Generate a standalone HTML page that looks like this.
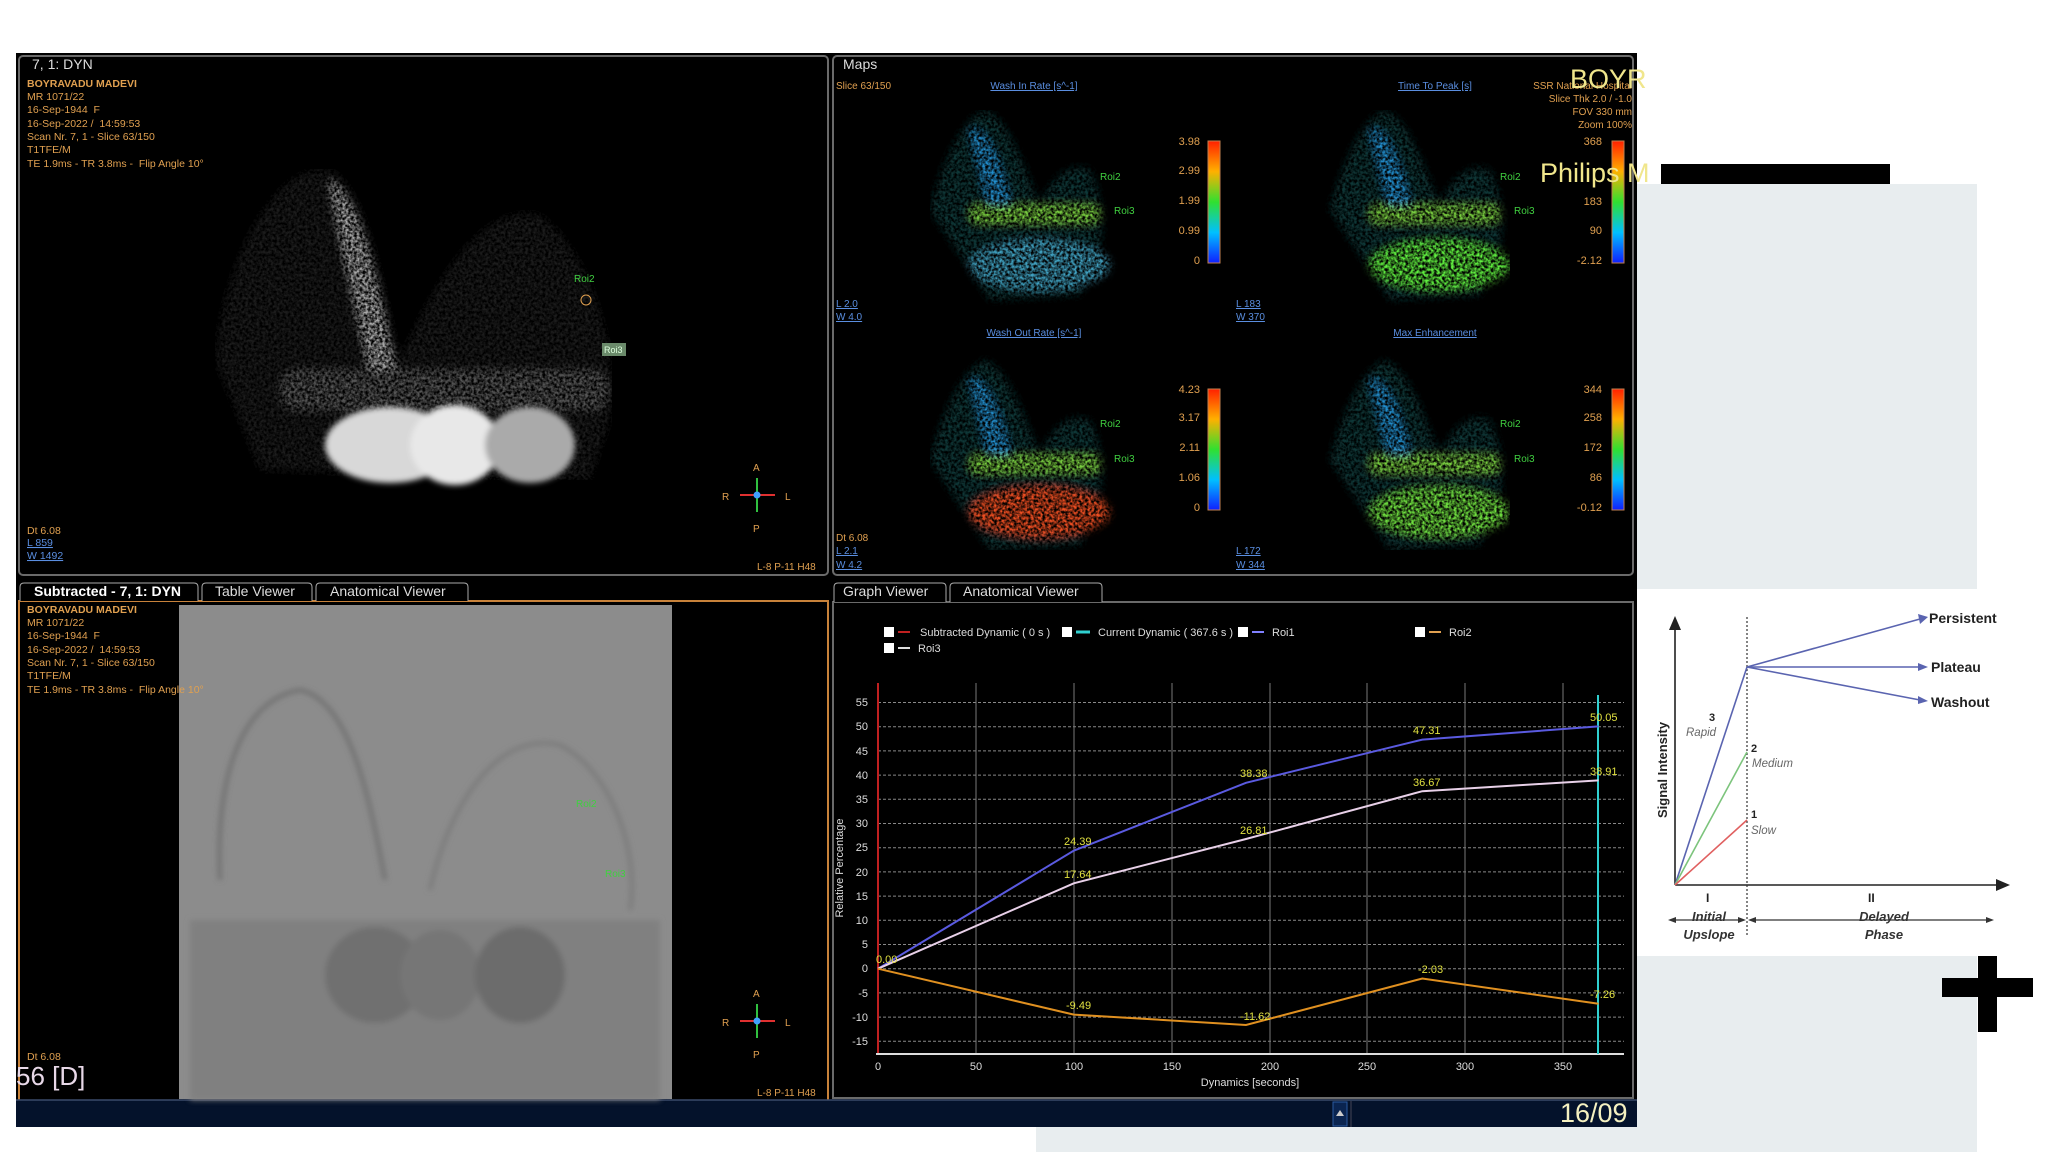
<!DOCTYPE html>
<html><head><meta charset="utf-8"><style>
html,body{margin:0;padding:0;background:#fff;}
body{width:2048px;height:1152px;overflow:hidden;position:relative;font-family:"Liberation Sans",sans-serif;}
svg{position:absolute;left:0;top:0;}
</style></head><body>
<svg width="2048" height="1152" viewBox="0 0 2048 1152" xmlns="http://www.w3.org/2000/svg" font-family="Liberation Sans Narrow, Liberation Sans, sans-serif">
<defs>
<filter id="b3"><feGaussianBlur stdDeviation="3"/></filter>
<filter id="speck" x="0" y="0" width="100%" height="100%">
<feGaussianBlur in="SourceGraphic" stdDeviation="4" result="bl"/>
<feTurbulence type="fractalNoise" baseFrequency="0.35" numOctaves="2" seed="3" result="n"/>
<feColorMatrix in="n" type="matrix" values="0 0 0 0 0  0 0 0 0 0  0 0 0 0 0  0 0 0 2.2 -0.6" result="na"/>
<feComposite in="bl" in2="na" operator="in"/>
</filter>
<linearGradient id="cb" x1="0" y1="0" x2="0" y2="1">
<stop offset="0" stop-color="#ff2000"/><stop offset="0.25" stop-color="#ffb000"/><stop offset="0.5" stop-color="#30e030"/><stop offset="0.75" stop-color="#00c0ff"/><stop offset="1" stop-color="#1020ff"/></linearGradient>
<g id="mapimg">
<path d="M0 100 C10 60 30 10 55 0 C80 10 95 60 110 95 C120 70 140 50 160 60 C175 90 175 130 165 150 L150 185 L60 190 Z" fill="#0a3838"/>
<path d="M40 20 C55 15 70 50 80 95 L60 100 Z" fill="#2090d0"/>
<rect x="40" y="95" width="130" height="18" rx="8" fill="#7ad040"/>
</g>
</defs>
<rect width="2048" height="1152" fill="#fff"/>
<rect x="1637" y="184" width="340" height="405" fill="#e8edef"/>
<rect x="1637" y="956" width="340" height="196" fill="#e8edef"/>
<rect x="1036" y="1127" width="601" height="25" fill="#e8edef"/>
<rect x="1661" y="164" width="229" height="20" fill="#000"/>
<rect x="16" y="53" width="1621" height="1074" fill="#000"/>
<rect x="19" y="56" width="809" height="519" fill="none" stroke="#6a6a6a" stroke-width="2" rx="4"/>
<rect x="833" y="56" width="800" height="519" fill="none" stroke="#6a6a6a" stroke-width="2" rx="4"/>
<rect x="19" y="601" width="809" height="502" fill="none" stroke="#c8823a" stroke-width="2"/>
<rect x="833" y="602" width="800" height="496" fill="none" stroke="#6a6a6a" stroke-width="2"/>
<rect x="16" y="1100" width="1621" height="27" fill="#04122b"/>
<line x1="16" y1="1100" x2="1637" y2="1100" stroke="#3a4a6a" stroke-width="1.5"/>
<rect x="1333" y="1102" width="14" height="24" fill="#0a2450" stroke="#2a5aa0"/>
<path d="M1336 1116 L1340 1110 L1344 1116 Z" fill="#ccc"/>
<line x1="1351" y1="1101" x2="1351" y2="1127" stroke="#445"/>

<text x="32" y="69" fill="#ddd" font-size="14">7, 1: DYN</text>
<g fill="#e0a050" font-size="10.5">
<text x="27" y="87" font-weight="bold">BOYRAVADU MADEVI</text>
<text x="27" y="100">MR 1071/22</text>
<text x="27" y="113">16-Sep-1944 &#160;F</text>
<text x="27" y="127">16-Sep-2022 / &#160;14:59:53</text>
<text x="27" y="140">Scan Nr. 7, 1 - Slice 63/150</text>
<text x="27" y="153">T1TFE/M</text>
<text x="27" y="167">TE 1.9ms - TR 3.8ms - &#160;Flip Angle 10°</text>
<text x="27" y="534">Dt 6.08</text>
<text x="757" y="570" font-size="10">L-8 P-11 H48</text>
</g>
<text x="27" y="546" fill="#5a8ee0" font-size="10.5" text-decoration="underline">L 859</text>
<text x="27" y="559" fill="#5a8ee0" font-size="10.5" text-decoration="underline">W 1492</text>
<g filter="url(#speck)">
<path d="M215 360 C225 250 280 160 330 170 C370 190 385 300 400 360 C430 290 480 200 540 215 C590 250 620 350 610 420 L590 480 L260 470 Z" fill="#1c1c1c"/>
<path d="M330 180 C360 200 375 280 395 370 L370 370 C355 300 340 240 330 180Z" fill="#aaa"/>
<rect x="280" y="370" width="330" height="40" rx="18" fill="#555"/>
</g>
<g filter="url(#b3)">
<ellipse cx="390" cy="445" rx="65" ry="38" fill="#d8d8d8"/>
<ellipse cx="455" cy="445" rx="45" ry="40" fill="#e8e8e8"/>
<ellipse cx="530" cy="445" rx="45" ry="38" fill="#aaa"/>
</g>
<text x="574" y="282" fill="#40d040" font-size="10">Roi2</text>
<rect x="602" y="343" width="24" height="13" fill="#6a8a6a"/>
<text x="604" y="353" fill="#dfd" font-size="9">Roi3</text>
<circle cx="586" cy="300" r="5" fill="none" stroke="#e0a050"/>
<g id="orient">
<line x1="757" y1="478" x2="757" y2="512" stroke="#30c040" stroke-width="2"/>
<line x1="740" y1="495" x2="775" y2="495" stroke="#e03030" stroke-width="2"/>
<circle cx="757" cy="495" r="3.5" fill="#40a0ff"/>
<text x="753" y="471" fill="#e0a050" font-size="10">A</text>
<text x="753" y="532" fill="#e0a050" font-size="10">P</text>
<text x="722" y="500" fill="#e0a050" font-size="10">R</text>
<text x="785" y="500" fill="#e0a050" font-size="10">L</text>
</g>

<text x="843" y="69" fill="#ddd" font-size="14">Maps</text>
<g fill="#e0a050" font-size="10">
<text x="836" y="89">Slice 63/150</text>
<g text-anchor="end"><text x="1632" y="89">SSR National Hospital</text><text x="1632" y="102">Slice Thk 2.0 / -1.0</text><text x="1632" y="115">FOV 330 mm</text><text x="1632" y="128">Zoom 100%</text></g>
<text x="836" y="541">Dt 6.08</text>
</g>
<g fill="#5a8ee0" font-size="10" text-decoration="underline" text-anchor="middle">
<text x="1034" y="89">Wash In Rate [s^-1]</text>
<text x="1435" y="89">Time To Peak [s]</text>
<text x="1034" y="336">Wash Out Rate [s^-1]</text>
<text x="1435" y="336">Max Enhancement</text>
</g>
<g fill="#5a8ee0" font-size="10" text-decoration="underline">
<text x="836" y="307">L 2.0</text><text x="836" y="320">W 4.0</text>
<text x="1236" y="307">L 183</text><text x="1236" y="320">W 370</text>
<text x="836" y="554">L 2.1</text><text x="836" y="568">W 4.2</text>
<text x="1236" y="554">L 172</text><text x="1236" y="568">W 344</text>
</g>
<g filter="url(#speck)">
<use href="#mapimg" x="930" y="110"/>
<use href="#mapimg" x="1330" y="110"/>
<use href="#mapimg" x="930" y="360"/>
<use href="#mapimg" x="1330" y="360"/>
<ellipse cx="1040" cy="265" rx="70" ry="25" fill="#40a0c0"/>
<ellipse cx="1440" cy="265" rx="70" ry="25" fill="#60f040"/>
<ellipse cx="1040" cy="512" rx="70" ry="25" fill="#f05020"/>
<ellipse cx="1440" cy="512" rx="70" ry="25" fill="#70e040"/>
</g>
<rect x="1208" y="141" width="12" height="122" fill="url(#cb)" stroke="#c08050"/>
<rect x="1612" y="141" width="12" height="122" fill="url(#cb)" stroke="#c08050"/>
<rect x="1208" y="389" width="12" height="121" fill="url(#cb)" stroke="#c08050"/>
<rect x="1612" y="389" width="12" height="121" fill="url(#cb)" stroke="#c08050"/>
<g fill="#e0a050" font-size="11" text-anchor="end">
<text x="1200" y="145">3.98</text><text x="1200" y="174">2.99</text><text x="1200" y="204">1.99</text><text x="1200" y="234">0.99</text><text x="1200" y="264">0</text>
<text x="1602" y="145">368</text><text x="1602" y="205">183</text><text x="1602" y="234">90</text><text x="1602" y="264">-2.12</text>
<text x="1200" y="393">4.23</text><text x="1200" y="421">3.17</text><text x="1200" y="451">2.11</text><text x="1200" y="481">1.06</text><text x="1200" y="511">0</text>
<text x="1602" y="393">344</text><text x="1602" y="421">258</text><text x="1602" y="451">172</text><text x="1602" y="481">86</text><text x="1602" y="511">-0.12</text>
</g>
<g fill="#40d040" font-size="10">
<text x="1100" y="180">Roi2</text><text x="1114" y="214">Roi3</text>
<text x="1500" y="180">Roi2</text><text x="1514" y="214">Roi3</text>
<text x="1100" y="427">Roi2</text><text x="1114" y="462">Roi3</text>
<text x="1500" y="427">Roi2</text><text x="1514" y="462">Roi3</text>
</g>

<text x="1570" y="88" fill="#f0e68c" font-size="27">BOYR</text>
<text x="1540" y="182" fill="#f0e68c" font-size="27">Philips M</text>

<g font-size="14">
<path d="M20 601 V587 Q20 583 24 583 H194 Q198 583 198 587 V601" fill="#000" stroke="#aaa"/>
<text x="34" y="596" fill="#fff" font-weight="bold">Subtracted - 7, 1: DYN</text>
<path d="M202 601 V587 Q202 583 206 583 H308 Q312 583 312 587 V601" fill="#000" stroke="#aaa"/>
<text x="215" y="596" fill="#ddd">Table Viewer</text>
<path d="M316 601 V587 Q316 583 320 583 H464 Q468 583 468 587 V601" fill="#000" stroke="#aaa"/>
<text x="330" y="596" fill="#ddd">Anatomical Viewer</text>
<path d="M834 602 V587 Q834 583 838 583 H942 Q946 583 946 587 V602" fill="#000" stroke="#aaa"/>
<text x="843" y="596" fill="#ddd">Graph Viewer</text>
<path d="M950 602 V587 Q950 583 954 583 H1098 Q1102 583 1102 587 V602" fill="#000" stroke="#aaa"/>
<text x="963" y="596" fill="#ddd">Anatomical Viewer</text>
</g>

<rect x="179" y="605" width="493" height="494" fill="#8c8c8c"/>
<g filter="url(#b3)">
<path d="M220 880 C215 780 240 700 300 690 C350 700 370 800 385 880" fill="none" stroke="#666" stroke-width="3"/>
<path d="M430 890 C450 800 500 730 560 745 C610 770 640 850 630 910" fill="none" stroke="#757575" stroke-width="3"/>
<rect x="190" y="920" width="470" height="180" fill="#808080"/>
<ellipse cx="375" cy="975" rx="50" ry="48" fill="#707070"/>
<ellipse cx="440" cy="975" rx="40" ry="45" fill="#767676"/>
<ellipse cx="520" cy="975" rx="45" ry="48" fill="#6c6c6c"/>
</g>
<g fill="#e0a050" font-size="10.5">
<text x="27" y="613" font-weight="bold">BOYRAVADU MADEVI</text>
<text x="27" y="626">MR 1071/22</text>
<text x="27" y="639">16-Sep-1944 &#160;F</text>
<text x="27" y="653">16-Sep-2022 / &#160;14:59:53</text>
<text x="27" y="666">Scan Nr. 7, 1 - Slice 63/150</text>
<text x="27" y="679">T1TFE/M</text>
<text x="27" y="693">TE 1.9ms - TR 3.8ms - &#160;Flip Angle 10°</text>
<text x="27" y="1060">Dt 6.08</text>
<text x="757" y="1096" font-size="10">L-8 P-11 H48</text>
</g>
<text x="576" y="807" fill="#40d040" font-size="10">Roi2</text>
<text x="605" y="877" fill="#40d040" font-size="10">Roi3</text>
<use href="#orient" x="0" y="526"/>
<text x="16" y="1085" fill="#e8d8e8" font-size="26">56 [D]</text>

<g font-size="11" fill="#ddd">
<rect x="884" y="627" width="10" height="10" fill="#fff"/><line x1="898" y1="632" x2="910" y2="632" stroke="#c02020" stroke-width="2"/>
<text x="920" y="636">Subtracted Dynamic ( 0 s )</text>
<rect x="1062" y="627" width="10" height="10" fill="#fff"/><line x1="1076" y1="632" x2="1090" y2="632" stroke="#30d0d0" stroke-width="3"/>
<text x="1098" y="636">Current Dynamic ( 367.6 s )</text>
<rect x="1238" y="627" width="10" height="10" fill="#fff"/><line x1="1252" y1="632" x2="1264" y2="632" stroke="#8080ff" stroke-width="2"/>
<text x="1272" y="636">Roi1</text>
<rect x="1415" y="627" width="10" height="10" fill="#fff"/><line x1="1429" y1="632" x2="1441" y2="632" stroke="#e0a050" stroke-width="2"/>
<text x="1449" y="636">Roi2</text>
<rect x="884" y="643" width="10" height="10" fill="#fff"/><line x1="898" y1="648" x2="910" y2="648" stroke="#ddd" stroke-width="2"/>
<text x="918" y="652">Roi3</text>
</g>
<g stroke="#888" stroke-width="1" stroke-dasharray="3,2">
<line x1="878" y1="702.5" x2="1624" y2="702.5"/><line x1="878" y1="726.7" x2="1624" y2="726.7"/><line x1="878" y1="750.9" x2="1624" y2="750.9"/><line x1="878" y1="775.1" x2="1624" y2="775.1"/><line x1="878" y1="799.3" x2="1624" y2="799.3"/><line x1="878" y1="823.5" x2="1624" y2="823.5"/><line x1="878" y1="847.7" x2="1624" y2="847.7"/><line x1="878" y1="871.9" x2="1624" y2="871.9"/><line x1="878" y1="896.1" x2="1624" y2="896.1"/><line x1="878" y1="920.3" x2="1624" y2="920.3"/><line x1="878" y1="944.5" x2="1624" y2="944.5"/><line x1="878" y1="968.7" x2="1624" y2="968.7"/><line x1="878" y1="992.9" x2="1624" y2="992.9"/><line x1="878" y1="1017.1" x2="1624" y2="1017.1"/><line x1="878" y1="1041.3" x2="1624" y2="1041.3"/>
</g>
<g stroke="#777" stroke-width="1">
<line x1="976" y1="683" x2="976" y2="1054"/><line x1="1074" y1="683" x2="1074" y2="1054"/><line x1="1172" y1="683" x2="1172" y2="1054"/><line x1="1270" y1="683" x2="1270" y2="1054"/><line x1="1367" y1="683" x2="1367" y2="1054"/><line x1="1465" y1="683" x2="1465" y2="1054"/><line x1="1563" y1="683" x2="1563" y2="1054"/>
</g>
<line x1="878" y1="683" x2="878" y2="1054" stroke="#c02020" stroke-width="2"/>
<line x1="876" y1="1054" x2="1624" y2="1054" stroke="#ddd" stroke-width="2"/>
<line x1="1598" y1="695" x2="1598" y2="1054" stroke="#30d0d0" stroke-width="2"/>
<polyline points="878,968.7 1073.8,850.7 1246,782.8 1422.3,739.6 1598.5,726.4" fill="none" stroke="#5a5ae0" stroke-width="2"/>
<polyline points="878,968.7 1073.8,883.3 1246,839 1422.3,791.2 1598.5,780.4" fill="none" stroke="#e8d0e8" stroke-width="2"/>
<polyline points="878,968.7 1073.8,1014.6 1246,1025 1422.3,978.5 1598.5,1003.8" fill="none" stroke="#e09020" stroke-width="2"/>
<g fill="#e0e040" font-size="11">
<text x="876" y="963">0.00</text>
<text x="1064" y="845">24.39</text><text x="1240" y="777">38.38</text><text x="1413" y="734">47.31</text><text x="1590" y="721">50.05</text>
<text x="1064" y="878">17.64</text><text x="1240" y="834">26.81</text><text x="1413" y="786">36.67</text><text x="1590" y="775">38.91</text>
<text x="1066" y="1009">-9.49</text><text x="1240" y="1020">-11.62</text><text x="1418" y="973">-2.03</text><text x="1590" y="998">-7.26</text>
</g>
<g fill="#ddd" font-size="11" text-anchor="end">
<text x="868" y="706">55</text><text x="868" y="730">50</text><text x="868" y="755">45</text><text x="868" y="779">40</text><text x="868" y="803">35</text><text x="868" y="827">30</text><text x="868" y="851">25</text><text x="868" y="876">20</text><text x="868" y="900">15</text><text x="868" y="924">10</text><text x="868" y="948">5</text><text x="868" y="972">0</text><text x="868" y="997">-5</text><text x="868" y="1021">-10</text><text x="868" y="1045">-15</text>
</g>
<g fill="#ddd" font-size="11" text-anchor="middle">
<text x="878" y="1070">0</text><text x="976" y="1070">50</text><text x="1074" y="1070">100</text><text x="1172" y="1070">150</text><text x="1270" y="1070">200</text><text x="1367" y="1070">250</text><text x="1465" y="1070">300</text><text x="1563" y="1070">350</text>
<text x="1250" y="1086">Dynamics [seconds]</text>
<text transform="translate(843,868) rotate(-90)">Relative Percentage</text>
</g>
<text x="1560" y="1122" fill="#f4f0c0" font-size="27">16/09</text>

<rect x="1637" y="589" width="340" height="367" fill="#fff"/>
<g stroke-width="1.6" fill="none">
<line x1="1675" y1="885" x2="1675" y2="626" stroke="#222"/>
<path d="M1669 630 L1675 616 L1681 630 Z" fill="#222" stroke="none"/>
<line x1="1675" y1="885" x2="2000" y2="885" stroke="#222"/>
<path d="M1996 879 L2010 885 L1996 891 Z" fill="#222" stroke="none"/>
<line x1="1747" y1="617" x2="1747" y2="937" stroke="#333" stroke-dasharray="2,2" stroke-width="1.2"/>
<line x1="1675" y1="885" x2="1747" y2="667" stroke="#5a64b0"/>
<line x1="1675" y1="885" x2="1747" y2="752" stroke="#7cc47c"/>
<line x1="1675" y1="885" x2="1747" y2="820" stroke="#e06060"/>
<line x1="1747" y1="667" x2="1920" y2="619" stroke="#5a64b0"/>
<line x1="1747" y1="667" x2="1920" y2="667" stroke="#5a64b0"/>
<line x1="1747" y1="667" x2="1920" y2="700" stroke="#5a64b0"/>
<line x1="1672" y1="920" x2="1738" y2="920" stroke="#333" stroke-width="1.2"/>
<line x1="1756" y1="920" x2="1990" y2="920" stroke="#333" stroke-width="1.2"/>
</g>
<g fill="#5a64b0">
<path d="M1918 614 L1928 617 L1920 624 Z"/><path d="M1918 663 L1928 667 L1918 671 Z"/><path d="M1918 696 L1928 701 L1918 704 Z"/>
</g>
<g fill="#333">
<path d="M1668 920 L1676 917 L1676 923Z"/><path d="M1746 920 L1738 917 L1738 923Z"/><path d="M1748 920 L1756 917 L1756 923Z"/><path d="M1994 920 L1986 917 L1986 923Z"/>
</g>
<g fill="#222" font-size="14" font-weight="bold">
<text x="1929" y="623">Persistent</text>
<text x="1931" y="672">Plateau</text>
<text x="1931" y="707">Washout</text>
<text x="1709" y="721" font-size="11">3</text>
<text x="1751" y="752" font-size="11">2</text>
<text x="1751" y="818" font-size="11">1</text>
<text x="1706" y="902" font-size="12">I</text>
<text x="1868" y="902" font-size="12">II</text>
<text transform="translate(1667,818) rotate(-90)" font-size="13">Signal Intensity</text>
</g>
<g fill="#666" font-size="11.5" font-style="italic">
<text x="1686" y="736">Rapid</text><text x="1752" y="767">Medium</text><text x="1751" y="834">Slow</text>
</g>
<g fill="#333" font-size="13" font-style="italic" font-weight="bold" text-anchor="middle">
<text x="1709" y="921">Initial</text><text x="1709" y="939">Upslope</text>
<text x="1884" y="921">Delayed</text><text x="1884" y="939">Phase</text>
</g>
<rect x="1978" y="956" width="19" height="76" fill="#000"/>
<rect x="1942" y="978" width="91" height="19" fill="#000"/>
</svg>
</body></html>
